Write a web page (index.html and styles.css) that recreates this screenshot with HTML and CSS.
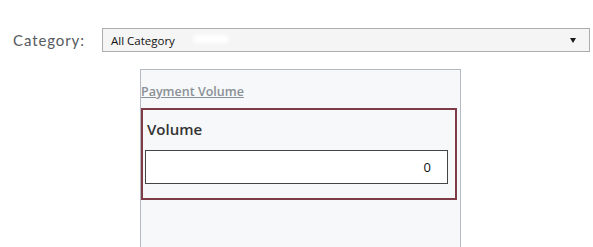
FILE: index.html
```html
<!DOCTYPE html>
<html lang="en">
<head>
    <meta charset="UTF-8">
    <title>Payment Volume</title>
    <link rel="stylesheet" href="styles.css">
</head>
<body>
    <div class="filter-row">
        <label class="filter-label">Category:</label>
        <div class="select-box">
            <span class="select-text">All Category</span>
            <span class="select-smear"></span>
            <span class="select-arrow"></span>
        </div>
    </div>

    <div class="panel">
        <a class="panel-link" href="#">Payment Volume</a>
        <div class="volume-box">
            <div class="volume-title">Volume</div>
            <div class="volume-input">0</div>
        </div>
    </div>
</body>
</html>
```

FILE: styles.css
```css
body {
    margin: 0;
    background: #ffffff;
    font-family: 'Open Sans', 'Liberation Sans', sans-serif;
}

.filter-row {
    display: flex;
    align-items: center;
    padding: 28px 0 0 13px;
}

.filter-label {
    width: 89px;
    font-family: 'Lato', 'Open Sans', sans-serif;
    font-size: 15px;
    letter-spacing: 0.9px;
    color: #555a60;
}

.select-box {
    position: relative;
    display: flex;
    align-items: center;
    width: 486px;
    height: 22px;
    border: 1px solid #acacac;
    background: #f5f5f5;
}

.select-text {
    padding-left: 8px;
    font-size: 11.5px;
    color: #111;
}

.select-smear {
    position: absolute;
    left: 90px;
    top: 6px;
    width: 36px;
    height: 8px;
    border-radius: 4px;
    background: #ffffff;
    filter: blur(2px);
}

.select-arrow {
    position: absolute;
    right: 13px;
    top: 9px;
    width: 0;
    height: 0;
    border-left: 3px solid transparent;
    border-right: 3px solid transparent;
    border-top: 5px solid #1a1a1a;
}

.panel {
    margin: 17px 0 0 140px;
    width: 319px;
    height: 200px;
    border: 1px solid #b5b9c4;
    background: #f7f8fa;
    padding-top: 14px;
}

.panel-link {
    display: block;
    width: fit-content;
    font-size: 12.5px;
    font-weight: 600;
    line-height: 15px;
    color: #8a9196;
    text-decoration: underline;
}

.volume-box {
    margin-top: 9px;
    width: 312px;
    border: 2px solid #7d3c46;
    padding: 10px 0 14px 0;
}

.volume-title {
    padding-left: 4px;
    font-size: 15px;
    line-height: 18px;
    font-weight: 600;
    color: #333;
}

.volume-input {
    margin: 12px 0 0 2px;
    width: 285px;
    height: 32px;
    line-height: 32px;
    padding-right: 16px;
    border: 1px solid #444;
    background: #ffffff;
    text-align: right;
    font-size: 13px;
    color: #111;
}
```
